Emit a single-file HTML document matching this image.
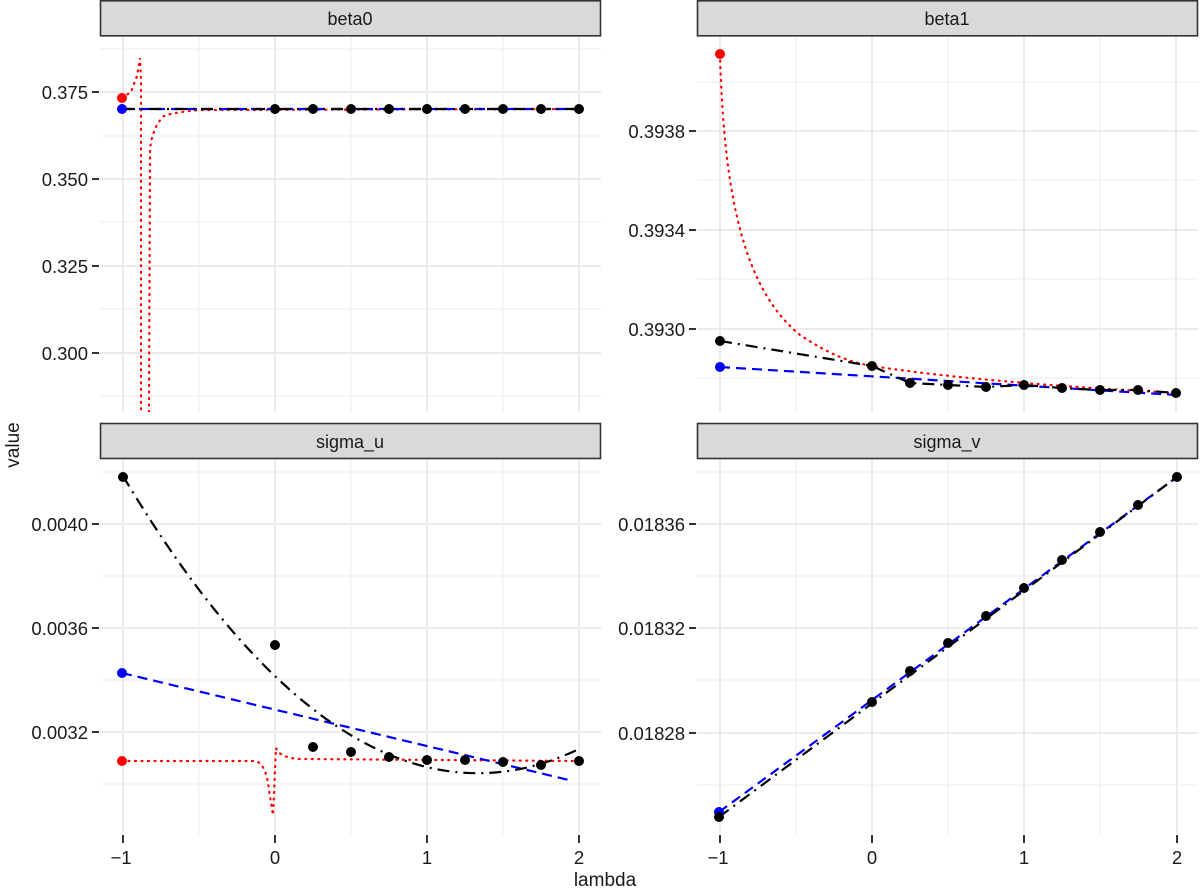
<!DOCTYPE html>
<html><head><meta charset="utf-8"><style>
html,body{margin:0;padding:0;background:#fff;}
svg{display:block;font-family:"Liberation Sans",Arial,sans-serif;}
</style></head><body>
<svg width="1200" height="889" viewBox="0 0 1200 889" xmlns="http://www.w3.org/2000/svg">
<defs>
<clipPath id="c1"><rect x="100" y="36" width="501" height="376"/></clipPath>
<clipPath id="c2"><rect x="697" y="36" width="501" height="376"/></clipPath>
<clipPath id="c3"><rect x="100" y="459" width="501" height="375"/></clipPath>
<clipPath id="c4"><rect x="697" y="459" width="501" height="375"/></clipPath>
</defs>
<g stroke="#ebebeb" fill="none">
<g stroke-width="1"><line x1="100" x2="601" y1="49" y2="49"/><line x1="100" x2="601" y1="136" y2="136"/><line x1="100" x2="601" y1="222" y2="222"/><line x1="100" x2="601" y1="309" y2="309"/><line x1="100" x2="601" y1="396" y2="396"/>
<line x1="199" x2="199" y1="36" y2="412"/><line x1="351" x2="351" y1="36" y2="412"/><line x1="503" x2="503" y1="36" y2="412"/></g>
<g stroke-width="2"><line x1="100" x2="601" y1="92" y2="92"/><line x1="100" x2="601" y1="179" y2="179"/><line x1="100" x2="601" y1="266" y2="266"/><line x1="100" x2="601" y1="353" y2="353"/>
<line x1="123" x2="123" y1="36" y2="412"/><line x1="275" x2="275" y1="36" y2="412"/><line x1="427" x2="427" y1="36" y2="412"/><line x1="579" x2="579" y1="36" y2="412"/></g>
<g stroke-width="1"><line x1="697" x2="1198" y1="82" y2="82"/><line x1="697" x2="1198" y1="180" y2="180"/><line x1="697" x2="1198" y1="279" y2="279"/><line x1="697" x2="1198" y1="378" y2="378"/>
<line x1="796" x2="796" y1="36" y2="412"/><line x1="948" x2="948" y1="36" y2="412"/><line x1="1100" x2="1100" y1="36" y2="412"/></g>
<g stroke-width="2"><line x1="697" x2="1198" y1="131" y2="131"/><line x1="697" x2="1198" y1="230" y2="230"/><line x1="697" x2="1198" y1="329" y2="329"/>
<line x1="720" x2="720" y1="36" y2="412"/><line x1="872" x2="872" y1="36" y2="412"/><line x1="1024" x2="1024" y1="36" y2="412"/><line x1="1176" x2="1176" y1="36" y2="412"/></g>
<g stroke-width="1"><line x1="100" x2="601" y1="472" y2="472"/><line x1="100" x2="601" y1="576" y2="576"/><line x1="100" x2="601" y1="680" y2="680"/><line x1="100" x2="601" y1="784" y2="784"/>
<line x1="199" x2="199" y1="459" y2="834"/><line x1="351" x2="351" y1="459" y2="834"/><line x1="503" x2="503" y1="459" y2="834"/></g>
<g stroke-width="2"><line x1="100" x2="601" y1="524" y2="524"/><line x1="100" x2="601" y1="628" y2="628"/><line x1="100" x2="601" y1="732" y2="732"/>
<line x1="123" x2="123" y1="459" y2="834"/><line x1="275" x2="275" y1="459" y2="834"/><line x1="427" x2="427" y1="459" y2="834"/><line x1="579" x2="579" y1="459" y2="834"/></g>
<g stroke-width="1"><line x1="697" x2="1198" y1="472" y2="472"/><line x1="697" x2="1198" y1="576" y2="576"/><line x1="697" x2="1198" y1="680" y2="680"/><line x1="697" x2="1198" y1="785" y2="785"/>
<line x1="796" x2="796" y1="459" y2="834"/><line x1="948" x2="948" y1="459" y2="834"/><line x1="1100" x2="1100" y1="459" y2="834"/></g>
<g stroke-width="2"><line x1="697" x2="1198" y1="524" y2="524"/><line x1="697" x2="1198" y1="628" y2="628"/><line x1="697" x2="1198" y1="733" y2="733"/>
<line x1="720" x2="720" y1="459" y2="834"/><line x1="872" x2="872" y1="459" y2="834"/><line x1="1024" x2="1024" y1="459" y2="834"/><line x1="1177" x2="1177" y1="459" y2="834"/></g>
</g>

<g fill="#d9d9d9" stroke="#333" stroke-width="1.6">
<rect x="100.5" y="0.8" width="500" height="35"/>
<rect x="697.5" y="0.8" width="500" height="35"/>
<rect x="100.5" y="423.5" width="500" height="35"/>
<rect x="697.5" y="423.5" width="500" height="35"/>
</g>
<g font-size="18" fill="#1a1a1a" text-anchor="middle">
<text x="350" y="25">beta0</text>
<text x="947" y="25">beta1</text>
<text x="350" y="448">sigma_u</text>
<text x="947" y="448">sigma_v</text>
</g>

<g stroke="#333" stroke-width="2">
<line x1="92" x2="99" y1="92" y2="92"/><line x1="92" x2="99" y1="179" y2="179"/><line x1="92" x2="99" y1="266" y2="266"/><line x1="92" x2="99" y1="353" y2="353"/>
<line x1="689" x2="696" y1="131" y2="131"/><line x1="689" x2="696" y1="230" y2="230"/><line x1="689" x2="696" y1="329" y2="329"/>
<line x1="92" x2="99" y1="524" y2="524"/><line x1="92" x2="99" y1="628" y2="628"/><line x1="92" x2="99" y1="732" y2="732"/>
<line x1="689" x2="696" y1="524" y2="524"/><line x1="689" x2="696" y1="628" y2="628"/><line x1="689" x2="696" y1="733" y2="733"/>
<line x1="123" x2="123" y1="835" y2="843"/><line x1="275" x2="275" y1="835" y2="843"/><line x1="427" x2="427" y1="835" y2="843"/><line x1="579" x2="579" y1="835" y2="843"/>
<line x1="720" x2="720" y1="835" y2="843"/><line x1="872" x2="872" y1="835" y2="843"/><line x1="1024" x2="1024" y1="835" y2="843"/><line x1="1177" x2="1177" y1="835" y2="843"/>
</g>
<g font-size="18.5" fill="#1a1a1a" text-anchor="end">
<text x="88" y="99">0.375</text><text x="88" y="186">0.350</text><text x="88" y="273">0.325</text><text x="88" y="360">0.300</text>
<text x="685" y="138">0.3938</text><text x="685" y="237">0.3934</text><text x="685" y="336">0.3930</text>
<text x="88" y="531">0.0040</text><text x="88" y="635">0.0036</text><text x="88" y="739">0.0032</text>
<text x="685" y="531">0.01836</text><text x="685" y="635">0.01832</text><text x="685" y="740">0.01828</text>
</g>
<g font-size="18.5" fill="#1a1a1a" text-anchor="middle">
<text x="121" y="864">−1</text><text x="275" y="864">0</text><text x="427" y="864">1</text><text x="579" y="864">2</text>
<text x="718" y="864">−1</text><text x="872" y="864">0</text><text x="1024" y="864">1</text><text x="1177" y="864">2</text>
<text x="605" y="886" font-size="19">lambda</text>
<text transform="translate(19,445) rotate(-90)" font-size="19">value</text>
</g>

<g clip-path="url(#c1)" fill="none" stroke-width="2.2">
<path d="M122,98 L131,92 L137,76 L140,58 L141,80 L141,412" stroke="#f00" stroke-dasharray="1 5.5" stroke-linecap="round"/>
<path d="M149,412 L150,150 L151,142 Q155,124 164,116 Q175,112 200,110 L579,109" stroke="#f00" stroke-dasharray="1 5.5" stroke-linecap="round"/>
<path d="M123,109 L579,109" stroke="#00f" stroke-dasharray="10 6"/>
<path d="M123,109 L579,109" stroke="#000" stroke-dasharray="12 6 2 6"/>
</g>
<g fill="#000"><circle cx="275" cy="109" r="5"/><circle cx="313" cy="109" r="5"/><circle cx="351" cy="109" r="5"/><circle cx="389" cy="109" r="5"/><circle cx="427" cy="109" r="5"/><circle cx="465" cy="109" r="5"/><circle cx="503" cy="109" r="5"/><circle cx="541" cy="109" r="5"/><circle cx="579" cy="109" r="5"/></g>
<circle cx="122" cy="98" r="5" fill="#f00"/><circle cx="122" cy="109" r="5" fill="#00f"/>

<g clip-path="url(#c2)" fill="none" stroke-width="2.2">
<path d="M720,54 C724,200 745,290 800,335 C830,355 850,362 872,366 C950,378 1050,386 1176,393" stroke="#f00" stroke-dasharray="1 5.5" stroke-linecap="round"/>
<path d="M720,367 L1176,395" stroke="#00f" stroke-dasharray="10 6"/>
<path d="M720,341 L872,366 L910,383 L948,385 L986,387 L1024,385 L1062,388 L1100,390 L1138,390 L1176,393" stroke="#000" stroke-dasharray="12 6 2 6"/>
</g>
<g fill="#000"><circle cx="720" cy="341" r="5"/><circle cx="872" cy="366" r="5"/><circle cx="910" cy="383" r="5"/><circle cx="948" cy="385" r="5"/><circle cx="986" cy="387" r="5"/><circle cx="1024" cy="385" r="5"/><circle cx="1062" cy="388" r="5"/><circle cx="1100" cy="390" r="5"/><circle cx="1138" cy="390" r="5"/><circle cx="1176" cy="393" r="5"/></g>
<circle cx="720" cy="54" r="5" fill="#f00"/><circle cx="720" cy="367" r="5" fill="#00f"/>

<g clip-path="url(#c3)" fill="none" stroke-width="2.2">
<path d="M122,761 L255,761 Q266,763 269,790 L273,815 L276,748 Q280,758 300,759 L579,761" stroke="#f00" stroke-dasharray="1 5.5" stroke-linecap="round"/>
<path d="M122,673 L573,781" stroke="#00f" stroke-dasharray="10 6"/>
<path d="M123,476 Q351,858 579,749" stroke="#000" stroke-dasharray="12 6 2 6"/>
</g>
<g fill="#000"><circle cx="123" cy="477" r="5"/><circle cx="275" cy="645" r="5"/><circle cx="313" cy="747" r="5"/><circle cx="351" cy="752" r="5"/><circle cx="389" cy="757" r="5"/><circle cx="427" cy="760" r="5"/><circle cx="465" cy="760" r="5"/><circle cx="503" cy="762" r="5"/><circle cx="541" cy="765" r="5"/><circle cx="579" cy="761" r="5"/></g>
<circle cx="122" cy="761" r="5" fill="#f00"/><circle cx="122" cy="673" r="5" fill="#00f"/>

<g clip-path="url(#c4)" fill="none" stroke-width="2.2">
<path d="M719,812 L1177,477" stroke="#00f" stroke-dasharray="10 6"/>
<path d="M719,817 L1177,477" stroke="#000" stroke-dasharray="12 6 2 6"/>
</g>
<circle cx="719" cy="812" r="5" fill="#00f"/>
<g fill="#000"><circle cx="719" cy="817" r="5"/><circle cx="872" cy="702" r="5"/><circle cx="910" cy="671" r="5"/><circle cx="948" cy="643" r="5"/><circle cx="986" cy="616" r="5"/><circle cx="1024" cy="588" r="5"/><circle cx="1062" cy="560" r="5"/><circle cx="1100" cy="532" r="5"/><circle cx="1138" cy="505" r="5"/><circle cx="1177" cy="477" r="5"/></g>
</svg>
</body></html>
